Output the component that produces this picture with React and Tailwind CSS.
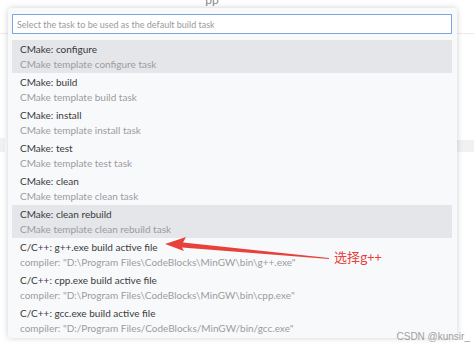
const tasks = [
  { label: 'CMake: configure', detail: 'CMake template configure task', active: true },
  { label: 'CMake: build', detail: 'CMake template build task' },
  { label: 'CMake: install', detail: 'CMake template install task' },
  { label: 'CMake: test', detail: 'CMake template test task' },
  { label: 'CMake: clean', detail: 'CMake template clean task' },
  { label: 'CMake: clean rebuild', detail: 'CMake template clean rebuild task', active: true },
  { label: 'C/C++: g++.exe build active file', detail: 'compiler: "D:\\Program Files\\CodeBlocks\\MinGW\\bin\\g++.exe"' },
  { label: 'C/C++: cpp.exe build active file', detail: 'compiler: "D:\\Program Files\\CodeBlocks\\MinGW\\bin\\cpp.exe"' },
  { label: 'C/C++: gcc.exe build active file', detail: 'compiler: "D:/Program Files/CodeBlocks/MinGW/bin/gcc.exe"' },
];

export default function App() {
  return (
    <div className="relative w-[474px] h-[346px] overflow-hidden bg-white font-['Lato',sans-serif]">
      {/* page behind the picker */}
      <div className="absolute inset-x-0 top-0 h-[34px] border-b border-[#ebebeb] flex justify-center">
        <span className="mt-[-9px] ml-[-50px] text-[12px] text-[#888]">pp</span>
      </div>
      <div className="absolute right-0 top-[140px] w-[18px] h-[12px] bg-[#f1f1f1]" />
      <div className="absolute left-0 top-[138px] w-[5px] h-[14px] bg-[#f1f1f1]" />

      {/* quick pick */}
      <div className="relative ml-[8px] mt-[8px] w-[449px] h-[330px] bg-[#f8f9fb] rounded-[3px] shadow-[0_0_6px_rgba(0,0,0,0.18)] pt-[6px] pl-[4px] pr-[5px]">
        <div className="h-[20px] border border-[#7ba8de] bg-white flex items-center px-[4px] text-[9px] text-[#9a9a9a] leading-none">
          Select the task to be used as the default build task
        </div>
        <div className="mt-[6px] flex flex-col">
          {tasks.map((t) => (
            <div
              key={t.label}
              className={`h-[33px] flex flex-col justify-center pl-[8px] leading-[15px] ${t.active ? 'bg-[#e4e6ea]' : ''}`}
            >
              <span className="text-[10px] text-[#3a3a3a]">{t.label}</span>
              <span className="text-[10px] text-[#9c9c9c]">{t.detail}</span>
            </div>
          ))}
        </div>
      </div>

      {/* annotation */}
      <svg className="absolute left-0 top-0" width="474" height="346">
        <polygon points="165,244 186,237 183,242.5 329,258 329,259 182,247.5 184,251" fill="#e8413a" />
      </svg>
      <div className="absolute left-[334px] top-[249px] text-[13px] leading-[16px] text-[#e8413a] font-['Noto_Sans_CJK_SC',sans-serif]">
        选择g++
      </div>

      <div className="absolute right-[4px] bottom-[2px] text-[10px] text-[#a0a0a0] font-['Liberation_Sans',sans-serif]">
        CSDN @kunsir_
      </div>
    </div>
  );
}
